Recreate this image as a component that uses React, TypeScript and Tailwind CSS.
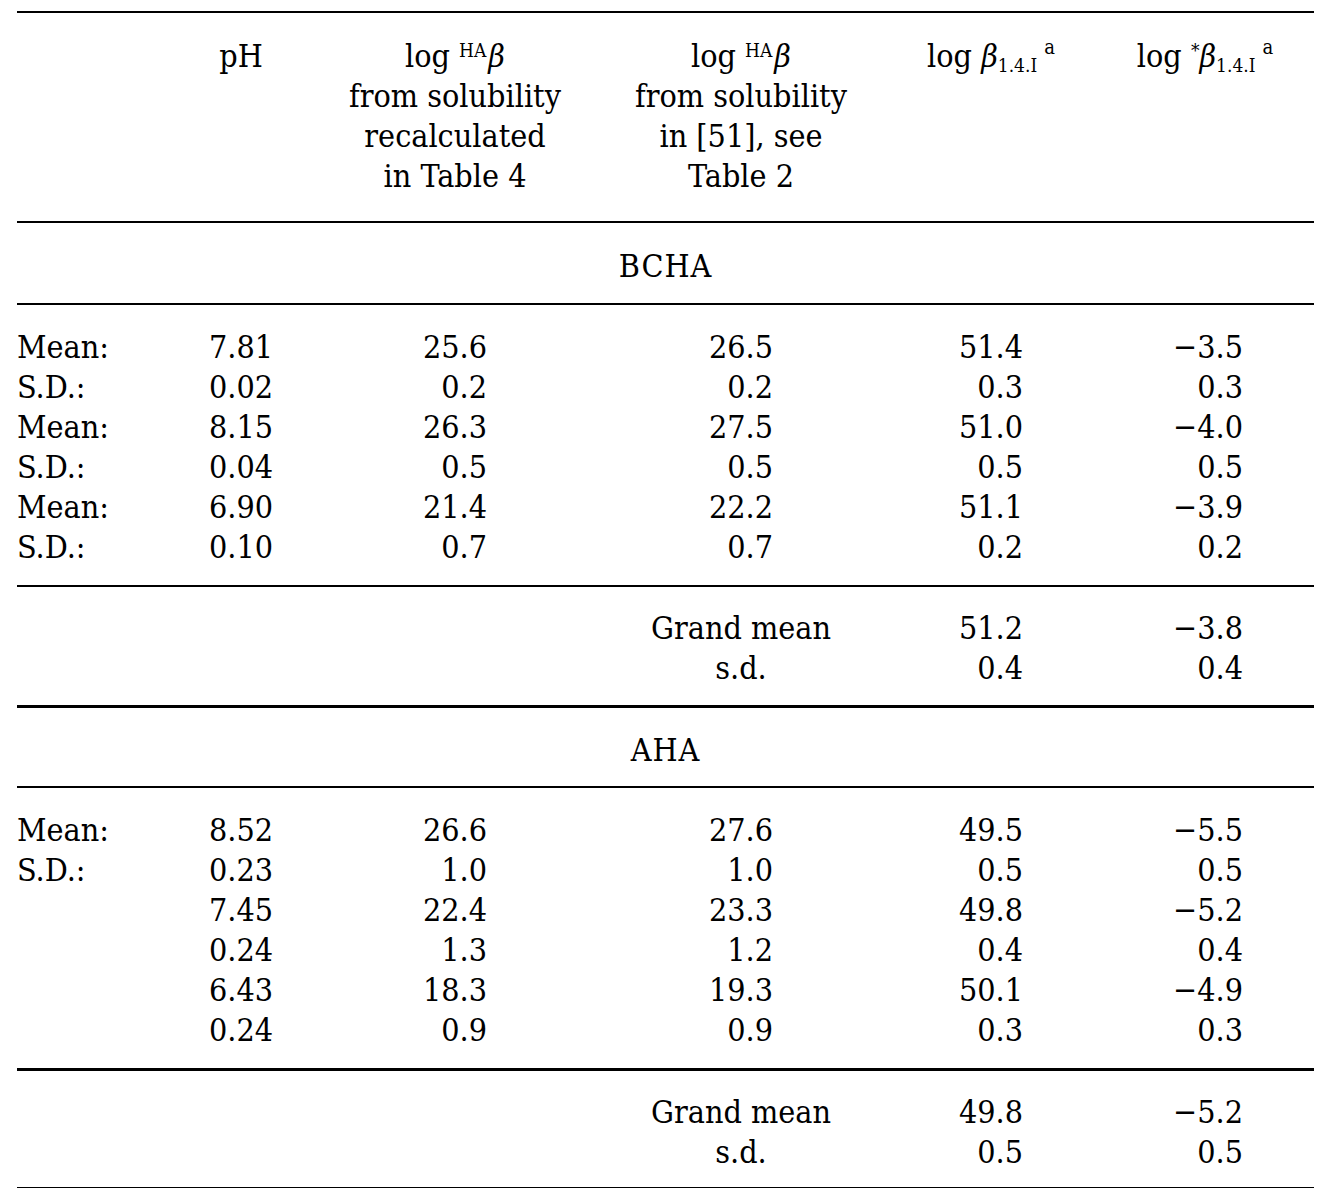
import React from "react";

const grid = "grid grid-cols-[173px_102px_326px_246px_254px_196px]";
const c3 = "text-right pr-[131px]";
const c4 = "text-right pr-[91px]";
const c5 = "text-right pr-[95px]";
const c6 = "text-right pr-[71px]";

type Row = [string, string, string, string, string, string];

const bcha: Row[] = [
  ["Mean:", "7.81", "25.6", "26.5", "51.4", "−3.5"],
  ["S.D.:", "0.02", "0.2", "0.2", "0.3", "0.3"],
  ["Mean:", "8.15", "26.3", "27.5", "51.0", "−4.0"],
  ["S.D.:", "0.04", "0.5", "0.5", "0.5", "0.5"],
  ["Mean:", "6.90", "21.4", "22.2", "51.1", "−3.9"],
  ["S.D.:", "0.10", "0.7", "0.7", "0.2", "0.2"],
];

const aha: Row[] = [
  ["Mean:", "8.52", "26.6", "27.6", "49.5", "−5.5"],
  ["S.D.:", "0.23", "1.0", "1.0", "0.5", "0.5"],
  ["", "7.45", "22.4", "23.3", "49.8", "−5.2"],
  ["", "0.24", "1.3", "1.2", "0.4", "0.4"],
  ["", "6.43", "18.3", "19.3", "50.1", "−4.9"],
  ["", "0.24", "0.9", "0.9", "0.3", "0.3"],
];

function DataRows({ rows }: { rows: Row[] }) {
  return (
    <div className="pt-[22px] pb-[18px]">
      {rows.map((r, i) => (
        <div key={i} className={grid + " h-[40px] leading-[40px]"}>
          <div className="text-left">{r[0]}</div>
          <div className="text-center">{r[1]}</div>
          <div className={c3}>{r[2]}</div>
          <div className={c4}>{r[3]}</div>
          <div className={c5}>{r[4]}</div>
          <div className={c6}>{r[5]}</div>
        </div>
      ))}
    </div>
  );
}

function Grand({
  m5,
  m6,
  s5,
  s6,
  pb,
}: {
  m5: string;
  m6: string;
  s5: string;
  s6: string;
  pb: string;
}) {
  return (
    <div className={"pt-[21px] " + pb}>
      <div className={grid + " h-[40px] leading-[40px]"}>
        <div />
        <div />
        <div />
        <div className="text-center">Grand mean</div>
        <div className={c5}>{m5}</div>
        <div className={c6}>{m6}</div>
      </div>
      <div className={grid + " h-[40px] leading-[40px]"}>
        <div />
        <div />
        <div />
        <div className="text-center">s.d.</div>
        <div className={c5}>{s5}</div>
        <div className={c6}>{s6}</div>
      </div>
    </div>
  );
}

function LogHA() {
  return (
    <span>
      log <span className="text-[19px] align-[10px] leading-none mr-[2px]">HA</span>
      <span className="italic">β</span>
    </span>
  );
}

function Section({ name, h }: { name: string; h: string }) {
  return (
    <div className={h + " flex items-center justify-center pt-[6px] tracking-[1px]"}>
      {name}
    </div>
  );
}

export default function App() {
  return (
    <div
      className="bg-white text-black min-h-[1188px] text-[32px] font-stretch-condensed"
      style={{ fontFamily: "'DejaVu Serif Condensed', 'DejaVu Serif', serif" }}
    >
      <div className="ml-[17px] w-[1297px] pt-[11px]">
        <div className="border-t-2 border-black" />
        <div className={grid + " pt-[23px] pb-[25px] leading-[40px]"}>
          <div />
          <div className="text-center">pH</div>
          <div className="text-center">
            <div>
              <LogHA />
            </div>
            <div>from solubility</div>
            <div>recalculated</div>
            <div>in Table 4</div>
          </div>
          <div className="text-center">
            <div>
              <LogHA />
            </div>
            <div>from solubility</div>
            <div>in [51], see</div>
            <div>Table 2</div>
          </div>
          <div className="text-center">
            log <span className="italic">β</span>
            <span className="text-[19px] align-[-5px] leading-none">1.4.I</span>
            <span className="text-[20px] align-[13px] leading-none ml-[7px]">a</span>
          </div>
          <div className="text-center pr-[22px]">
            log <span className="text-[19px] align-[10px] leading-none">*</span>
            <span className="italic">β</span>
            <span className="text-[19px] align-[-5px] leading-none">1.4.I</span>
            <span className="text-[20px] align-[13px] leading-none ml-[7px]">a</span>
          </div>
        </div>
        <div className="border-t-2 border-black" />
        <Section name="BCHA" h="h-[80px]" />
        <div className="border-t-2 border-black" />
        <DataRows rows={bcha} />
        <div className="border-t-2 border-black" />
        <Grand m5="51.2" m6="−3.8" s5="0.4" s6="0.4" pb="pb-[17px]" />
        <div className="border-t-[3px] border-black" />
        <Section name="AHA" h="h-[78px]" />
        <div className="border-t-2 border-black" />
        <DataRows rows={aha} />
        <div className="border-t-[3px] border-black" />
        <Grand m5="49.8" m6="−5.2" s5="0.5" s6="0.5" pb="pb-[15px]" />
        <div className="border-t border-black" />
      </div>
    </div>
  );
}
